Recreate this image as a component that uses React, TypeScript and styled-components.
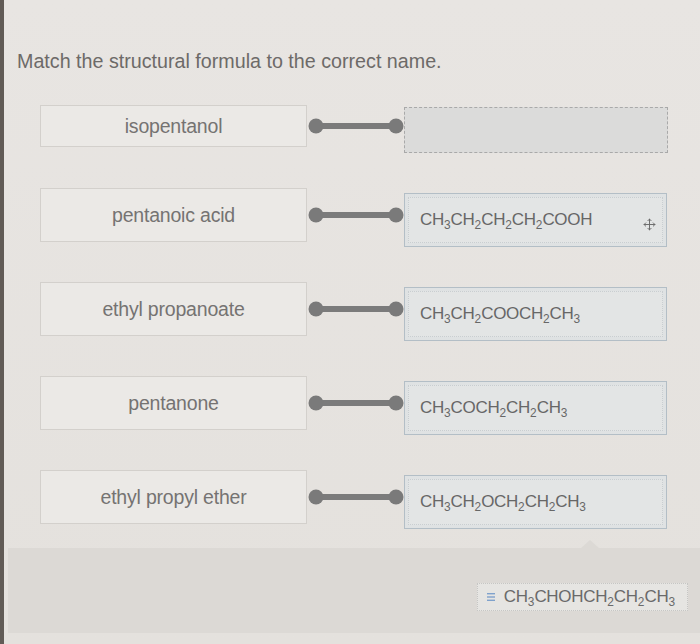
import React from "react";
import styled, { createGlobalStyle } from "styled-components";
import { Move } from "lucide-react";

const GlobalStyle = createGlobalStyle`
  html, body {
    margin: 0;
    padding: 0;
    background: #e5e2de;
  }
  body {
    font-family: "Liberation Sans", Helvetica, Arial, sans-serif;
  }
`;

type Pair = { name: string; formula?: string };

const pairs: Pair[] = [
  { name: "isopentanol" },
  { name: "pentanoic acid", formula: "CH3CH2CH2CH2COOH" },
  { name: "ethyl propanoate", formula: "CH3CH2COOCH2CH3" },
  { name: "pentanone", formula: "CH3COCH2CH2CH3" },
  { name: "ethyl propyl ether", formula: "CH3CH2OCH2CH2CH3" },
];

// digits in a condensed formula are printed as subscripts
const Formula = ({ value }: { value: string }) => (
  <FormulaText>
    {value.split(/(\d+)/).map((part, i) =>
      /^\d+$/.test(part) ? <Sub key={i}>{part}</Sub> : part
    )}
  </FormulaText>
);

const Connector = () => (
  <Link width="97" height="20" viewBox="0 0 97 20">
    <line x1="9" y1="10" x2="89" y2="10" stroke="#7b7b7b" strokeWidth="6" />
    <circle cx="9" cy="10" r="7.5" fill="#7a7a7a" />
    <circle cx="89" cy="10" r="7.5" fill="#7a7a7a" />
  </Link>
);

const HandleIcon = () => (
  <svg width="10" height="10" viewBox="0 0 10 10">
    <rect x="1" y="1" width="8" height="1.4" fill="#7fa2cc" />
    <rect x="1" y="4.3" width="8" height="1.4" fill="#7fa2cc" />
    <rect x="1" y="7.6" width="8" height="1.4" fill="#7fa2cc" />
  </svg>
);

export default function App() {
  return (
    <>
      <GlobalStyle />
      <Frame>
        <Title>Match the structural formula to the correct name.</Title>
        <Rows>
          {pairs.map((p, i) => (
            <Row key={p.name} $first={i === 0}>
              <NameBox $first={i === 0}>{p.name}</NameBox>
              <Connector />
              {p.formula ? (
                <Target>
                  <Inner>
                    <Formula value={p.formula} />
                    {i === 1 && (
                      <MoveMark>
                        <Move size={13} strokeWidth={1.8} color="#6b6b6b" />
                      </MoveMark>
                    )}
                  </Inner>
                </Target>
              ) : (
                <EmptyTarget />
              )}
            </Row>
          ))}
        </Rows>
        <Tray>
          <Chip>
            <HandleIcon />
            <Formula value="CH3CHOHCH2CH2CH3" />
          </Chip>
        </Tray>
      </Frame>
    </>
  );
}

const Frame = styled.div`
  width: 700px;
  height: 644px;
  box-sizing: border-box;
  border-left: 4px solid #615b56;
  overflow: hidden;
  background: linear-gradient(180deg, #e8e5e2 0%, #e4e1dd 100%);
`;

const Title = styled.h1`
  margin: 0;
  padding: 49px 0 0 13px;
  font-size: 19.7px;
  line-height: 24px;
  font-weight: 400;
  color: #6d6a68;
`;

const Rows = styled.div`
  display: flex;
  flex-direction: column;
  gap: 38px;
  margin: 30px 0 0 36px;
`;

const Row = styled.div<{ $first: boolean }>`
  display: flex;
  align-items: center;
  height: ${p => (p.$first ? 46 : 56)}px;
`;

const NameBox = styled.div<{ $first: boolean }>`
  display: flex;
  align-items: center;
  justify-content: center;
  box-sizing: border-box;
  width: 267px;
  height: ${p => (p.$first ? 42 : 54)}px;
  border: 1px solid #d3d0cc;
  background: #ebe9e6;
  color: #757372;
  font-size: 19.5px;
  letter-spacing: -0.2px;
`;

const Link = styled.svg`
  flex: none;
  display: block;
`;

const Target = styled.div`
  box-sizing: border-box;
  width: 263px;
  height: 54px;
  margin-top: 10px;
  padding: 3px;
  border: 1.5px solid #b3bec6;
  background: #dfe2e3;
`;

const Inner = styled.div`
  display: flex;
  align-items: center;
  height: 100%;
  box-sizing: border-box;
  padding: 0 6px 0 11px;
  border: 1px dotted #c9ced1;
  background: #e3e5e5;
  color: #676767;
  font-size: 17px;
  letter-spacing: -0.3px;
`;

const FormulaText = styled.span`
  white-space: nowrap;
`;

const MoveMark = styled.span`
  display: flex;
  margin-left: auto;
  margin-top: 8px;
`;

const EmptyTarget = styled.div`
  box-sizing: border-box;
  width: 264px;
  height: 46px;
  margin-top: 8px;
  border: 1px dashed #a9a9a9;
  background: #dbdbda;
`;

const Sub = styled.sub`
  font-size: 0.7em;
  vertical-align: -0.3em;
  line-height: 0;
  letter-spacing: 0;
`;

const Tray = styled.div`
  position: relative;
  display: flex;
  justify-content: flex-end;
  align-items: flex-start;
  box-sizing: border-box;
  height: 85px;
  margin: 23px 0 0 4px;
  padding: 35px 12px 0 0;
  background: #dcd9d5;

  &::before {
    content: "";
    position: absolute;
    top: -8px;
    left: 573px;
    border-left: 9px solid transparent;
    border-right: 9px solid transparent;
    border-bottom: 8px solid #dcd9d5;
  }
`;

const Chip = styled.div`
  display: flex;
  align-items: center;
  gap: 8px;
  box-sizing: border-box;
  height: 28px;
  padding: 0 12px 0 8px;
  border: 1px dotted #c6c6c4;
  background: #e6e5e2;
  color: #6a6a6a;
  font-size: 17px;
  letter-spacing: -0.3px;
`;
